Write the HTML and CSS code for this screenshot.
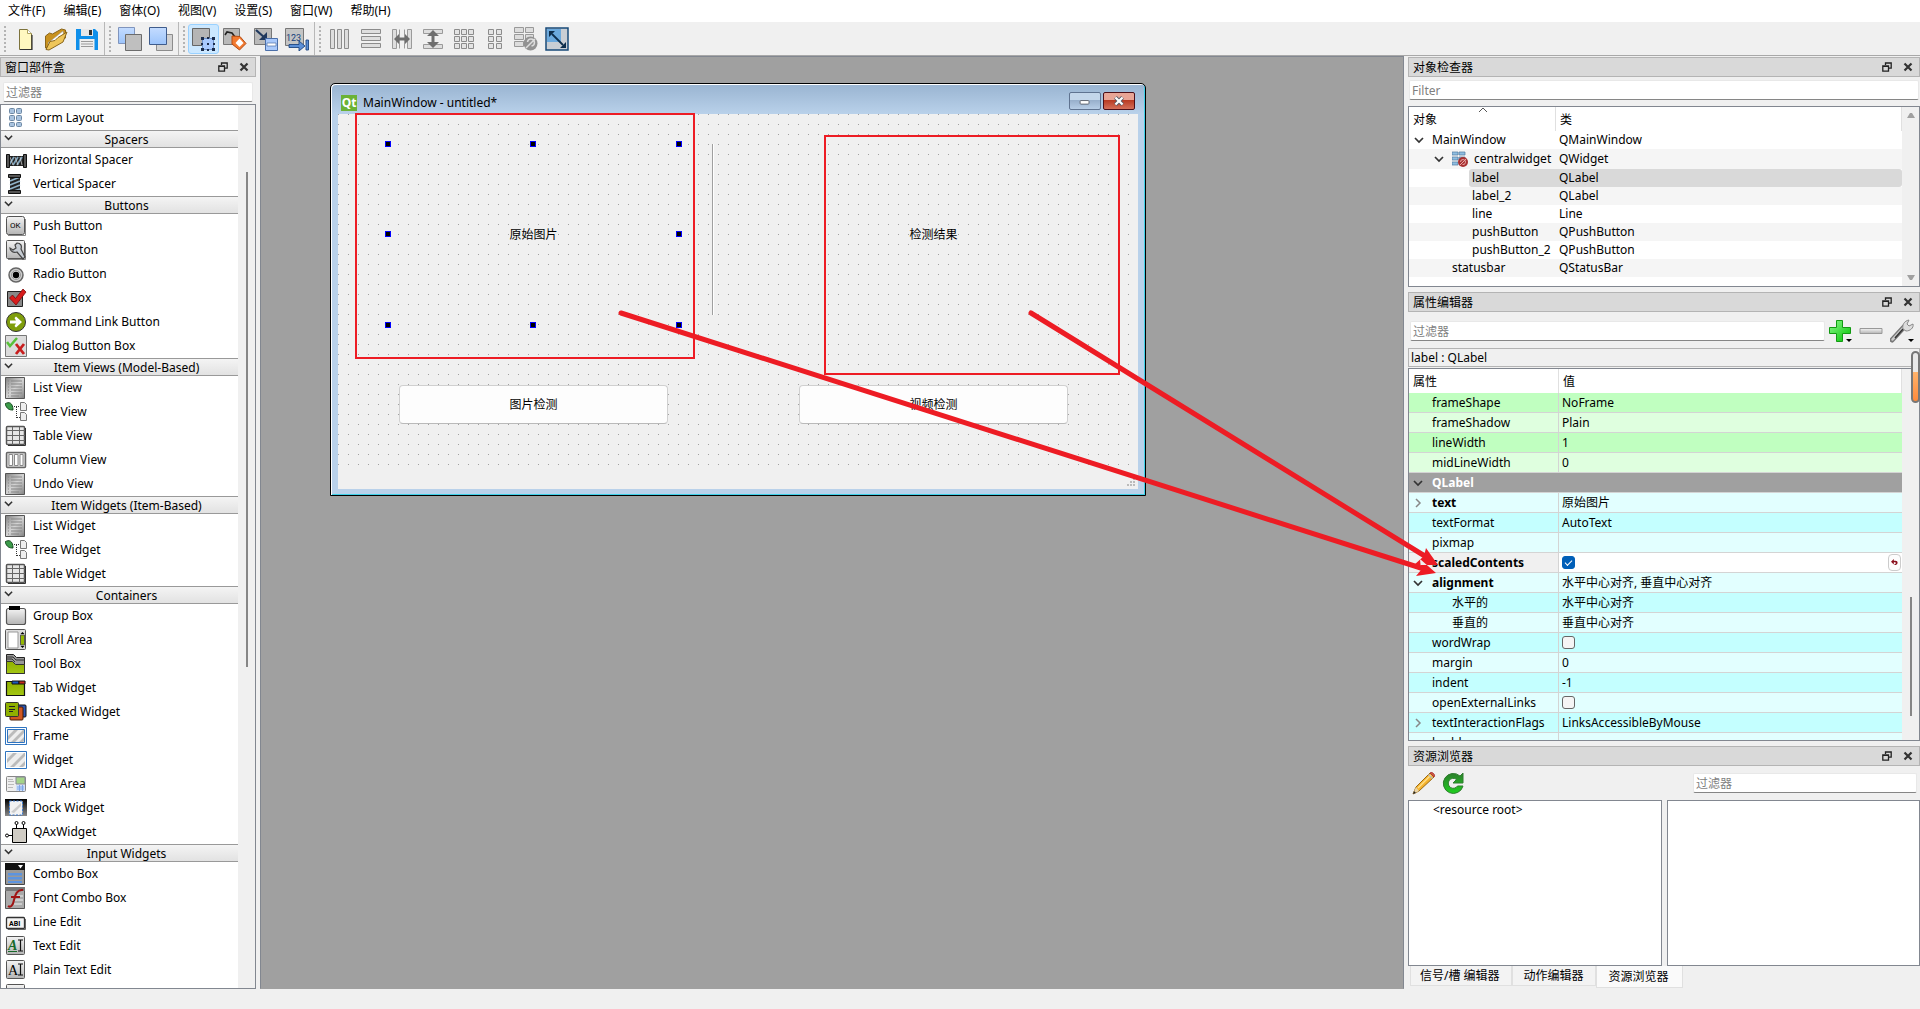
FILE: index.html
```html
<!DOCTYPE html>
<html lang="zh-CN">
<head>
    <meta charset="UTF-8">
    <meta name="viewport" content="width=device-width, initial-scale=1.0">
    <title>Qt Designer</title>
    <link rel="stylesheet" href="styles.css">
</head>
<body>
    <!-- icon sprites -->
    <svg class="sprites" aria-hidden="true">
        <defs>
            <linearGradient id="g-grey" x1="0" y1="0" x2="0" y2="1"><stop offset="0" stop-color="#f4f4f4"/><stop offset="1" stop-color="#b4b4b4"/></linearGradient>
            <linearGradient id="g-dark" x1="0" y1="0" x2="1" y2="1"><stop offset="0" stop-color="#808080"/><stop offset=".5" stop-color="#d4d4d4"/><stop offset="1" stop-color="#808080"/></linearGradient>
            <linearGradient id="g-blue" x1="0" y1="0" x2="0" y2="1"><stop offset="0" stop-color="#c4dcff"/><stop offset="1" stop-color="#9cc4fb"/></linearGradient>
            <linearGradient id="g-plus" x1="0" y1="0" x2="1" y2="1"><stop offset="0" stop-color="#8dfb8d"/><stop offset="1" stop-color="#00c000"/></linearGradient>
            <linearGradient id="g-lime" x1="0" y1="0" x2="0" y2="1"><stop offset="0" stop-color="#8fb000"/><stop offset="1" stop-color="#a3c614"/></linearGradient>
            <linearGradient id="g-green" x1="0" y1="0" x2="0" y2="1"><stop offset="0" stop-color="#2c7d2c"/><stop offset="1" stop-color="#1fd01f"/></linearGradient>
            <linearGradient id="g-black" x1="0" y1="0" x2="0" y2="1"><stop offset="0" stop-color="#000"/><stop offset="1" stop-color="#8a8a8a"/></linearGradient>
        </defs>
        <symbol id="i-float" viewBox="0 0 10 10"><path d="M3.5 3V.8h5.7v5.4H7M3 1h6.4M.8 3.8h5.7v5.4H.8zM.8 4.4h5.7" fill="none" stroke="#222" stroke-width="1.3"/></symbol>
        <symbol id="i-close" viewBox="0 0 10 10"><path d="M1.5 1.5l7 7M8.5 1.5l-7 7" stroke="#333" stroke-width="2.2"/></symbol>
        <symbol id="i-chev" viewBox="0 0 10 10"><path d="M1 3l4 4 4-4" fill="none" stroke="#333" stroke-width="1.7"/></symbol>
        <symbol id="i-chevr" viewBox="0 0 10 10"><path d="M3 1l4 4-4 4" fill="none" stroke="#888" stroke-width="1.5"/></symbol>

        <!-- toolbar -->
        <symbol id="i-new" viewBox="0 0 24 24"><path d="M6.500 2.500h8l4 4v16h-12z" fill="#fff8c0" stroke="#7d733c"/><path d="M14.500 2.500v4h4" fill="#fff" stroke="#b0a560"/><path d="M7 22.500h12V8" fill="none" stroke="#333" stroke-width="1.2"/></symbol>
        <symbol id="i-open" viewBox="0 0 24 24"><path d="M1.500 21V9l4-3 3 1 9-5 4 1v8z" fill="#c9921e" stroke="#8a661c"/><path d="M4 16L19 4l1 8-14 9z" fill="#fff" stroke="#999" stroke-width=".6"/><path d="M2 22.500l4-8 5-1 3-3 9-5.500-4 10L5 23z" fill="#efc65a" stroke="#8a661c"/></symbol>
        <symbol id="i-save" viewBox="0 0 24 24"><path d="M1 2h19l3 3v18H1z" fill="#0f8fea"/><path d="M6 2h12v7H6z" fill="#e8e8e8"/><path d="M14 3h3v5h-3z" fill="#333"/><path d="M4.500 12h15v11h-15z" fill="#eee"/><path d="M6 14.500h12M6 17h12M6 19.500h12" stroke="#999"/></symbol>
        <symbol id="i-back" viewBox="0 0 24 24"><path d="M.5.5h16v16H.5z" fill="url(#g-blue)" stroke="#7f94bd"/><path d="M7.500 7.500h16v16h-16z" fill="#bfbfbf" stroke="#6c6c6c"/></symbol>
        <symbol id="i-front" viewBox="0 0 24 24"><path d="M7.500 7.500h16v16h-16z" fill="#d2d2d2" stroke="#8c8c8c"/><path d="M.5.5h17v17H.5z" fill="url(#g-blue)" stroke="#3f5c8c"/></symbol>
        <symbol id="i-widgets" viewBox="0 0 24 24"><path d="M.5 1.500h17v17H.500z" fill="#b5b5b5" stroke="#666"/><path d="M10.500 11.500h11v11h-11z" fill="#a9caff" stroke="#6e93cc"/><path d="M9 10h3v3H9zM15 10h2v2h-2zM20 10h3v3h-3zM9 16h2v2H9zM21 16h2v2h-2zM9 21h3v3H9zM15 22h2v2h-2zM20 21h3v3h-3zM15 16h2v2h-2z" fill="#1c2c4c"/></symbol>
        <symbol id="i-signals" viewBox="0 0 24 24"><path d="M.5 1.500h16v16H.500z" fill="#b9b9b9" stroke="#777"/><path d="M2 8l2-3 5 1 3 4" fill="none" stroke="#222" stroke-width="1.600"/><path d="M9 9l8 .5 6 7-6.500 6.500L9 17z" fill="#f37a30" stroke="#b44a10"/><path d="M16.500 11.500l4 4.500-4 4-4-4z" fill="#fff"/></symbol>
        <symbol id="i-buddy" viewBox="0 0 24 24"><path d="M.5 1.500h17v16H.500z" fill="#b9b9b9" stroke="#777"/><path d="M2 3l9 8" stroke="#20395e" stroke-width="2.200"/><path d="M13 13V5l-8 8z" fill="#20395e"/><path d="M11.500 11.500h12v12h-12z" fill="#a9c9fb" stroke="#4a6ea8"/><path d="M13 16h9v3h-9z" fill="#fff" stroke="#4a6ea8" stroke-width=".700"/></symbol>
        <symbol id="i-lay-h" viewBox="0 0 24 24"><path d="M2.500 2.500h4v19h-4zM9.500 2.500h4v19h-4zM16.500 2.500h4v19h-4z" fill="#dedede" stroke="#8c8c8c"/></symbol>
        <symbol id="i-lay-v" viewBox="0 0 24 24"><path d="M2.500 2.500h19v4h-19zM2.500 9.500h19v4h-19zM2.500 16.500h19v4h-19z" fill="#dedede" stroke="#8c8c8c"/></symbol>
        <symbol id="i-split-h" viewBox="0 0 24 24"><path d="M2.500 2.500h4v19h-4zM17.500 2.500h4v19h-4zM9.500 2.500v19M14.500 2.500v19" fill="#dedede" stroke="#9a9a9a"/><path d="M4 12l5-5v3.500h6V7l5 5-5 5v-3.500H9V17z" fill="#6e6e6e"/></symbol>
        <symbol id="i-split-v" viewBox="0 0 24 24"><path d="M2.500 2.500h19v4h-19zM2.500 17.500h19v4h-19z" fill="#dedede" stroke="#9a9a9a"/><path d="M12 3l6 6h-4.500v6H18l-6 6-6-6h4.500V9H6z" fill="#6e6e6e"/></symbol>
        <symbol id="i-grid" viewBox="0 0 24 24"><path d="M2.500 2.500h5v5h-5zM9.500 2.500h5v5h-5zM16.500 2.500h5v5h-5zM2.500 9.500h5v5h-5zM9.500 9.500h5v5h-5zM16.500 9.500h5v5h-5zM2.500 16.500h5v5h-5zM9.500 16.500h5v5h-5zM16.500 16.500h5v5h-5z" fill="#e4e4e4" stroke="#8c8c8c"/></symbol>
        <symbol id="i-form" viewBox="0 0 24 24"><path d="M5.500 2.500h5v5h-5zM13.500 2.500h5v5h-5zM5.500 9.500h5v5h-5zM13.500 9.500h5v5h-5zM5.500 16.500h5v5h-5zM13.500 16.500h5v5h-5z" fill="#e4e4e4" stroke="#8c8c8c"/></symbol>
        <symbol id="i-break" viewBox="0 0 24 24"><path d="M.5.500h9v5h-9zM11.500.500h8v5h-8zM.5 7.500h9v5h-9zM11.500 7.500h8v5h-8zM.5 14.500h9v5h-9z" fill="#ddd" stroke="#999"/><circle cx="16.500" cy="16.500" r="7" fill="#929292"/><path d="M13.500 15a3.500 3.500 0 1 1 4 4M12 21l9-9" fill="none" stroke="#ddd" stroke-width="1.500"/></symbol>
        <symbol id="i-adjust" viewBox="0 0 24 24"><path d="M1 1h22v22H1z" fill="#c9ced4" stroke="#174a78" stroke-width="1.500"/><path d="M2 2h14v13H2z" fill="#6ba9dd"/><path d="M7 7l11 11" stroke="#0d2d4c" stroke-width="1.800"/><path d="M4 4h6l-6 6zM21 21h-6l6-6z" fill="#0d2d4c"/></symbol>

        <!-- widget box -->
        <symbol id="w-form" viewBox="0 0 22 22"><g fill="#a9c3df" stroke="#6c87a3"><rect x="4.500" y="1.500" width="5" height="5" rx="1"/><rect x="11.500" y="1.500" width="5" height="5" rx="1"/><rect x="4.500" y="8.500" width="5" height="5" rx="1"/><rect x="11.500" y="8.500" width="5" height="5" rx="1"/><rect x="4.500" y="15.500" width="5" height="4" rx="1"/><rect x="11.500" y="15.500" width="5" height="4" rx="1"/></g></symbol>
        <symbol id="w-hspacer" viewBox="0 0 22 22"><path d="M3 7h16v10H3z" fill="#222"/><path d="M4 16L9 8M8 16l5-8M12 16l5-8" stroke="#7fa3bb" stroke-width="1.800"/><path d="M5 8l3 8M10 8l3 8M15 8l2 8" stroke="#ddd" stroke-width=".700"/><path d="M1.500 5.500h3v13h-3zM18.500 5.500h3v13h-3z" fill="#555" stroke="#111"/></symbol>
        <symbol id="w-vspacer" viewBox="0 0 22 22"><path d="M5 4h10v14H5z" fill="#222"/><path d="M5 8l10-4M5 12l10-4M5 16l10-4M6 19l9-3" stroke="#8fb2c8" stroke-width="1.800"/><path d="M3.500 1.500h12v3h-12zM3.500 17.500h12v3h-12z" fill="#555" stroke="#111"/></symbol>
        <symbol id="w-tool" viewBox="0 0 22 22"><rect x="1.500" y="1.500" width="18" height="18" rx="1" fill="url(#g-grey)" stroke="#555"/><path d="M3 20.500h17.500V4" fill="none" stroke="#888"/><path d="M12 4c4 0 5 3 4 6l4 8-2 2-6-7c-4 1-7-1-7-4l3 2 3-2-1-3z" fill="#c6ccd3" stroke="#444" stroke-width="1.200"/></symbol>
        <symbol id="w-radio" viewBox="0 0 22 22"><circle cx="11" cy="12" r="7" fill="#ccc" stroke="#666" stroke-width="1.500"/><circle cx="11" cy="12" r="4.500" fill="#ddd" stroke="#888" stroke-width=".800"/><circle cx="11" cy="12" r="3.200" fill="#000"/></symbol>
        <symbol id="w-check" viewBox="0 0 22 22"><path d="M2.500 4.500h15v15h-15z" fill="#888" stroke="#222"/><path d="M4.500 11l3-3 3 3.500L18 2l3 3-10 13z" fill="#d81c1c" stroke="#7c0a0a" stroke-width=".800"/></symbol>
        <symbol id="w-link" viewBox="0 0 22 22"><circle cx="11" cy="11" r="9.500" fill="#7f9d0b" stroke="#333"/><path d="M5 9.500h6L9.500 7 11 5.500l6 5.500-6 5.500L9.500 15l1.500-2.500H5z" fill="#fff"/></symbol>
        <symbol id="w-dialog" viewBox="0 0 22 22"><path d="M.5.5h21v21H.5z" fill="#dcdcdc" stroke="#777"/><path d="M2 7l3 4 7-8" fill="none" stroke="#57c038" stroke-width="2.500"/><path d="M11 9l8 10M19 9l-8 10" stroke="#c81e1e" stroke-width="2.800"/></symbol>
        <symbol id="w-list" viewBox="0 0 22 22"><path d="M.5.5h19v21H.5z" fill="url(#g-dark)" stroke="#555"/><path d="M3 4h1m2 0h11M3 7h1m2 0h11M3 10h1m2 0h11M3 13h1m2 0h11M3 16h1m2 0h11M3 19h1m2 0h8" stroke="#858585"/></symbol>
        <symbol id="w-tree" viewBox="0 0 22 22"><path d="M0 3c4-3 8-1 8 6-4 0-6-1-8-6z" fill="#3c9c4a" stroke="#174a20"/><path d="M9 5.500h6M11.500 6v11M12 16.500h4" stroke="#333" stroke-dasharray="1 1"/><path d="M15.500 1.500h4l2 2v6h-6zM15.500 11.500h4l2 2v6h-6z" fill="#eee" stroke="#777"/></symbol>
        <symbol id="w-table" viewBox="0 0 22 22"><rect x="1.500" y="1.500" width="18" height="18" rx="1" fill="#e6e6e6" stroke="#555" stroke-width="1.500"/><path d="M2 5.500h18M2 10.500h18M2 15.500h18M7.500 2v18M14.500 2v18" stroke="#666"/><path d="M3 20.500h17.500V3" fill="none" stroke="#333"/></symbol>
        <symbol id="w-column" viewBox="0 0 22 22"><rect x="1.500" y="3.500" width="19" height="15" rx="1" fill="#d9d9d9" stroke="#666" stroke-width="1.500"/><path d="M4 5.500h3.500v11H4zM9.500 5.500h3.500v11H9.500zM15 5.500h3v11h-3z" fill="#fff" stroke="#888"/></symbol>
        <symbol id="w-group" viewBox="0 0 22 22"><rect x="1.500" y="3.500" width="19" height="16" rx="2" fill="url(#g-grey)" stroke="#555" stroke-width="1.200"/><path d="M4 1h11v4H4z" fill="#000"/></symbol>
        <symbol id="w-scroll" viewBox="0 0 22 22"><rect x=".5" y=".5" width="20" height="20" rx="1" fill="#ddd" stroke="#555"/><path d="M3 3h10v16H3z" fill="#fff" stroke="#999"/><path d="M15.500 6h4v10h-4z" fill="#94b800" stroke="#555"/><path d="M15.500 5l2-2 2 2zM15.500 17l2 2 2-2z" fill="#000"/></symbol>
        <symbol id="w-toolbox" viewBox="0 0 22 22"><path d="M1.500 1.500h7l3 3h8v16h-18z" fill="#999" stroke="#222"/><path d="M1 4h7l3 3h9M1 6h6l3 3" stroke="#333" fill="none"/><path d="M1.500 8.500h6l3 3h9v9h-18z" fill="url(#g-lime)" stroke="#333"/></symbol>
        <symbol id="w-tabw" viewBox="0 0 22 22"><path d="M1.500 4.500h18v14h-18z" fill="url(#g-lime)" stroke="#111" stroke-width="1.200"/><path d="M7 4h7v3H7z" fill="#1d5cc0" stroke="#111"/><path d="M14 4h6v3h-6z" fill="#c42a1c" stroke="#111"/></symbol>
        <symbol id="w-stack" viewBox="0 0 22 22"><rect x="9" y="4" width="12" height="12" rx="1" fill="#2a55b5" stroke="#111"/><rect x="5" y="6" width="13" height="13" rx="1" fill="#cf5722" stroke="#4a1a00"/><rect x=".5" y="1.500" width="13" height="14" rx="1" fill="#8fb000" stroke="#333"/><path d="M4 5.500h6M4 8.500h6M4 10.500h4" stroke="#222"/></symbol>
        <symbol id="w-frame" viewBox="0 0 22 22"><path d="M.5 2.500h21v17H.5z" fill="#fff" stroke="#2f74c0"/><path d="M2.500 4.500h17v13h-17z" fill="#eee" stroke="#2f74c0"/><path d="M3 11l6-6h4L3 15zM6 17L18 5h1v3l-9 9zM14 17l5-5v4l-1 1z" fill="#bbb"/></symbol>
        <symbol id="w-widget" viewBox="0 0 22 22"><path d="M.5 2.500h21v17H.5z" fill="#fff" stroke="#2f74c0"/><path d="M2 4h18v14H2z" fill="#eee"/><path d="M2 10l6-6h4L2 14zM5 18L19 4h1v3L9 18zM14 18l6-6v4l-2 2z" fill="#bbb"/></symbol>
        <symbol id="w-mdi" viewBox="0 0 22 22"><rect x="1.500" y="3.500" width="19" height="15" rx="1" fill="#eee" stroke="#888"/><path d="M11 4h9v7h-9z" fill="#a4d488" stroke="#889"/><path d="M11 12h9v6h-9z" fill="#cfe0fa"/><path d="M12 14h7M12 16h7M14.500 12v6M17.500 12v6" stroke="#7fa6e8"/><path d="M3 6.500h5M3 8.500h6M3 11.500h6M3 14.500h5" stroke="#bbb"/></symbol>
        <symbol id="w-dock" viewBox="0 0 22 22"><path d="M0 2h22v17H0z" fill="url(#g-black)"/><path d="M4.500 4h13v14h-13z" fill="#f2f2f2" stroke="#3c7cd4" stroke-dasharray="2 1.500"/><path d="M6 15L16 6v3l-7 7z" fill="#ccc"/></symbol>
        <symbol id="w-qax" viewBox="0 0 22 22"><path d="M7.500 7.500h14v14h-14z" fill="#d0ccc4" stroke="#000"/><path d="M11.500 7V3M18.500 7V3M7 14.500H3" stroke="#000"/><g fill="#fff" stroke="#000"><circle cx="11.500" cy="2" r="1.500"/><circle cx="18.500" cy="2" r="1.500"/><circle cx="2" cy="14.500" r="1.500"/></g></symbol>
        <symbol id="w-combo" viewBox="0 0 22 22"><path d="M.5.5h19v21H.5z" fill="#999" stroke="#444"/><path d="M0 0h20v7H0z" fill="#111"/><path d="M13 2h5l-2.500 3.500z" fill="#fff"/><path d="M3 10h14v2.500H3zM3 14h14v2.500H3zM3 18h14v2H3z" fill="#5c94e0"/></symbol>
        <symbol id="w-fcombo" viewBox="0 0 22 22"><path d="M.5.5h19v21H.5z" fill="#aaa" stroke="#555"/><path d="M0 0h20v4H0z" fill="#777"/><path d="M10 9h8M9 13h9M9 17h8" stroke="#ccc" stroke-width="2"/><path d="M3 19c3 2 5-1 6-6s3-11 9-10M6 10h9" fill="none" stroke="#a01414" stroke-width="2"/></symbol>
        <symbol id="w-blank" viewBox="0 0 22 22"><rect x="1.500" y="1.500" width="18" height="18" rx="1" fill="url(#g-grey)" stroke="#555"/></symbol>

        <!-- right docks -->
        <symbol id="i-nolayout" viewBox="0 0 16 16"><path d="M0 1h6v3H0zM7 1h6v3H7zM0 6h6v3H0zM0 11h6v3H0zM7 6h6v3H7z" fill="#8fbde0" stroke="#4d7a9e" stroke-width=".700"/><circle cx="11" cy="11" r="5" fill="#a83232"/><path d="M8.500 11a2.500 2.500 0 1 1 2 2.500M8 14l6-6" stroke="#e8a8a8" fill="none"/></symbol>
        <symbol id="i-plus" viewBox="0 0 24 24"><path d="M8.500 1.500h6v7h8v6h-8v8h-6v-8h-7v-6h7z" fill="url(#g-plus)" stroke="#129a12"/><path d="M18 20h6l-3 3z" fill="#000"/></symbol>
        <symbol id="i-minus" viewBox="0 0 24 24"><path d="M1 9.500h22v5H1z" fill="url(#g-grey)" stroke="#999"/></symbol>
        <symbol id="i-wrench" viewBox="0 0 24 24"><path d="M2 21L14 8" stroke="#777" stroke-width="5" stroke-linecap="round"/><path d="M2.500 20.500L14 8" stroke="#ccc" stroke-width="2.500" stroke-linecap="round"/><path d="M5 19l8-9" stroke="#333" stroke-width="1.500"/><path d="M13 10c-1-4 1-8 6-9l-2 4 2 2 4-2c1 4-3 7-7 7z" fill="#ddd" stroke="#888"/><path d="M18 20h6l-3 3z" fill="#000"/></symbol>
        <symbol id="i-pencil" viewBox="0 0 24 24"><path d="M1 23l3-7L18 2l4 4L7 20z" fill="#f5b32d" stroke="#9a6a14"/><path d="M6 17L19 4" stroke="#ffe08a" stroke-width="1.500"/><path d="M18 2c2-2 6 2 4 4l-4-4z" fill="#d05a42" stroke="#a33"/><path d="M16.500 3.500l4 4" stroke="#bbb" stroke-width="1.500"/><path d="M1 23l3-7 3 4z" fill="#e9d3a6"/><path d="M1 23l1-3 2 2z" fill="#222"/></symbol>
        <symbol id="i-reload" viewBox="0 0 24 24"><path d="M22 2v10H12l3.500-3.500A5 5 0 1 0 16.500 15H22A10 10 0 1 1 19 5z" fill="url(#g-green)" stroke="#2f7d2f"/></symbol>
        <symbol id="i-undo" viewBox="0 0 10 10"><path d="M0 4l4-4v2.500h2.500a2.500 2.500 0 0 1 0 6H5V7h1a1.200 1.200 0 0 0 0-2.200H4V8z" fill="#8a0f1c"/></symbol>
    </svg>

    <nav class="menubar">
        <button>文件(F)</button>
        <button>编辑(E)</button>
        <button>窗体(O)</button>
        <button>视图(V)</button>
        <button>设置(S)</button>
        <button>窗口(W)</button>
        <button>帮助(H)</button>
    </nav>

    <div class="toolbar">
        <div class="tool-group">
            <button aria-label="新建"><svg><use href="#i-new"/></svg></button>
            <button aria-label="打开"><svg><use href="#i-open"/></svg></button>
            <button aria-label="保存"><svg><use href="#i-save"/></svg></button>
        </div>
        <div class="tool-group">
            <button aria-label="放到后面"><svg><use href="#i-back"/></svg></button>
            <button aria-label="放到前面"><svg><use href="#i-front"/></svg></button>
        </div>
        <div class="tool-group">
            <button class="active" aria-label="编辑窗口部件"><svg><use href="#i-widgets"/></svg></button>
            <button aria-label="编辑信号/槽"><svg><use href="#i-signals"/></svg></button>
            <button aria-label="编辑伙伴"><svg><use href="#i-buddy"/></svg></button>
            <button aria-label="编辑Tab顺序"><svg viewBox="0 0 24 24"><path d="M.5 1.500h18v17H.500z" fill="#c4c4c4" stroke="#777"/><text class="icon-digits" x="1" y="14">123</text><path d="M4 17.500h10v-3.500l6 5-6 5v-3.500H4zM21 13h2.500v10H21z" fill="#5c8fd6" stroke="#1d4682" stroke-width=".900"/></svg></button>
        </div>
        <div class="tool-group">
            <button aria-label="水平布局"><svg><use href="#i-lay-h"/></svg></button>
            <button aria-label="垂直布局"><svg><use href="#i-lay-v"/></svg></button>
            <button aria-label="使用分裂器水平布局"><svg><use href="#i-split-h"/></svg></button>
            <button aria-label="使用分裂器垂直布局"><svg><use href="#i-split-v"/></svg></button>
            <button aria-label="栅格布局"><svg><use href="#i-grid"/></svg></button>
            <button aria-label="表单布局"><svg><use href="#i-form"/></svg></button>
            <button aria-label="打破布局"><svg><use href="#i-break"/></svg></button>
            <button aria-label="调整大小"><svg><use href="#i-adjust"/></svg></button>
        </div>
    </div>

    <div class="workspace">
        <aside class="dock widget-box">
            <header class="dock-title">
                <h2>窗口部件盒</h2>
                <button aria-label="浮动"><svg><use href="#i-float"/></svg></button>
                <button aria-label="关闭"><svg><use href="#i-close"/></svg></button>
            </header>
            <input class="filter" type="text" placeholder="过滤器" aria-label="过滤器">
            <div class="box-frame">
                <div class="box-list">
                    <ul>
                        <li><svg><use href="#w-form"/></svg>Form Layout</li>
                    </ul>
                    <button class="category"><svg><use href="#i-chev"/></svg>Spacers</button>
                    <ul>
                        <li><svg><use href="#w-hspacer"/></svg>Horizontal Spacer</li>
                        <li><svg><use href="#w-vspacer"/></svg>Vertical Spacer</li>
                    </ul>
                    <button class="category"><svg><use href="#i-chev"/></svg>Buttons</button>
                    <ul>
                        <li><svg viewBox="0 0 22 22"><rect x="1.500" y="1.500" width="18" height="18" rx="2" fill="url(#g-grey)" stroke="#555"/><path d="M3 20.500h17.500V4" fill="none" stroke="#888"/><text class="icon-ok" x="5" y="13">OK</text></svg>Push Button</li>
                        <li><svg><use href="#w-tool"/></svg>Tool Button</li>
                        <li><svg><use href="#w-radio"/></svg>Radio Button</li>
                        <li><svg><use href="#w-check"/></svg>Check Box</li>
                        <li><svg><use href="#w-link"/></svg>Command Link Button</li>
                        <li><svg><use href="#w-dialog"/></svg>Dialog Button Box</li>
                    </ul>
                    <button class="category"><svg><use href="#i-chev"/></svg>Item Views (Model-Based)</button>
                    <ul>
                        <li><svg><use href="#w-list"/></svg>List View</li>
                        <li><svg><use href="#w-tree"/></svg>Tree View</li>
                        <li><svg><use href="#w-table"/></svg>Table View</li>
                        <li><svg><use href="#w-column"/></svg>Column View</li>
                        <li><svg><use href="#w-list"/></svg>Undo View</li>
                    </ul>
                    <button class="category"><svg><use href="#i-chev"/></svg>Item Widgets (Item-Based)</button>
                    <ul>
                        <li><svg><use href="#w-list"/></svg>List Widget</li>
                        <li><svg><use href="#w-tree"/></svg>Tree Widget</li>
                        <li><svg><use href="#w-table"/></svg>Table Widget</li>
                    </ul>
                    <button class="category"><svg><use href="#i-chev"/></svg>Containers</button>
                    <ul>
                        <li><svg><use href="#w-group"/></svg>Group Box</li>
                        <li><svg><use href="#w-scroll"/></svg>Scroll Area</li>
                        <li><svg><use href="#w-toolbox"/></svg>Tool Box</li>
                        <li><svg><use href="#w-tabw"/></svg>Tab Widget</li>
                        <li><svg><use href="#w-stack"/></svg>Stacked Widget</li>
                        <li><svg><use href="#w-frame"/></svg>Frame</li>
                        <li><svg><use href="#w-widget"/></svg>Widget</li>
                        <li><svg><use href="#w-mdi"/></svg>MDI Area</li>
                        <li><svg><use href="#w-dock"/></svg>Dock Widget</li>
                        <li><svg><use href="#w-qax"/></svg>QAxWidget</li>
                    </ul>
                    <button class="category"><svg><use href="#i-chev"/></svg>Input Widgets</button>
                    <ul>
                        <li><svg><use href="#w-combo"/></svg>Combo Box</li>
                        <li><svg><use href="#w-fcombo"/></svg>Font Combo Box</li>
                        <li><svg viewBox="0 0 22 22"><rect x="1.500" y="6.500" width="18" height="11" rx="1" fill="#f3f3f3" stroke="#333" stroke-width="1.300"/><path d="M3 18.500h17.500V8" fill="none" stroke="#666"/><text class="icon-abi" x="4" y="15">ABI</text></svg>Line Edit</li>
                        <li><svg viewBox="0 0 22 22"><rect x="1.500" y="1.500" width="18" height="18" rx="1" fill="url(#g-grey)" stroke="#555"/><text class="icon-a rich" x="3" y="15">A</text><path d="M3 16.500h9" stroke="#17692a"/><path d="M13 5h5M13 16h5M15.500 5v11" stroke="#111" stroke-width="1.200"/></svg>Text Edit</li>
                        <li><svg viewBox="0 0 22 22"><rect x="1.500" y="1.500" width="18" height="18" rx="1" fill="url(#g-grey)" stroke="#555"/><text class="icon-a" x="3" y="16">A</text><path d="M13 5h5M13 16h5M15.500 5v11" stroke="#111" stroke-width="1.200"/></svg>Plain Text Edit</li>
                        <li><svg><use href="#w-blank"/></svg></li>
                    </ul>
                </div>
                <div class="scrollbar"><span class="thumb box-thumb"></span></div>
            </div>
        </aside>

        <main class="canvas">
            <section class="form-window">
                <header class="form-title">
                    <span class="qt-logo">Qt</span>
                    <h1>MainWindow - untitled*</h1>
                    <button class="win-min" aria-label="最小化"><svg viewBox="0 0 32 18"><rect x="10.500" y="8.500" width="10" height="4" rx="1" fill="#fff" stroke="#555a66"/></svg></button>
                    <button class="win-close" aria-label="关闭"><svg viewBox="0 0 32 18"><path d="M12 5l8 8M20 5l-8 8" stroke="#555a66" stroke-width="4.500"/><path d="M12 5l8 8M20 5l-8 8" stroke="#fff" stroke-width="2.500"/></svg></button>
                </header>
                <div class="form-body">
                    <div class="form-grid">
                        <div class="form-label label-1">原始图片
                            <i class="handle nw"></i><i class="handle n"></i><i class="handle ne"></i>
                            <i class="handle w"></i><i class="handle e"></i>
                            <i class="handle sw"></i><i class="handle s"></i><i class="handle se"></i>
                        </div>
                        <div class="form-line"></div>
                        <div class="form-label label-2">检测结果</div>
                        <button class="form-button button-1">图片检测</button>
                        <button class="form-button button-2">视频检测</button>
                    </div>
                    <div class="form-status">
                        <svg viewBox="0 0 9 9"><path d="M6 0h2v2H6zM3 3h2v2H3zM6 3h2v2H6zM0 6h2v2H0zM3 6h2v2H3zM6 6h2v2H6z" fill="#bbb"/></svg>
                    </div>
                </div>
            </section>
        </main>

        <aside class="right-docks">
            <section class="dock">
                <header class="dock-title">
                    <h2>对象检查器</h2>
                    <button aria-label="浮动"><svg><use href="#i-float"/></svg></button>
                    <button aria-label="关闭"><svg><use href="#i-close"/></svg></button>
                </header>
                <input class="filter object-filter" type="text" placeholder="Filter" aria-label="Filter">
                <div class="frame object-frame">
                    <table class="object-tree">
                        <thead>
                            <tr><th class="col-object">对象<svg class="sort" viewBox="0 0 10 6"><path d="M1 5l4-4 4 4" fill="none" stroke="#555"/></svg></th><th>类</th></tr>
                        </thead>
                        <tbody>
                            <tr><td><div class="cell level-0"><svg><use href="#i-chev"/></svg>MainWindow</div></td><td>QMainWindow</td></tr>
                            <tr class="tall"><td><div class="cell level-1"><svg><use href="#i-chev"/></svg><svg class="node-icon"><use href="#i-nolayout"/></svg>centralwidget</div></td><td>QWidget</td></tr>
                            <tr class="selected"><td><div class="cell level-2">label</div></td><td>QLabel</td></tr>
                            <tr><td><div class="cell level-2">label_2</div></td><td>QLabel</td></tr>
                            <tr><td><div class="cell level-2">line</div></td><td>Line</td></tr>
                            <tr><td><div class="cell level-2">pushButton</div></td><td>QPushButton</td></tr>
                            <tr><td><div class="cell level-2">pushButton_2</div></td><td>QPushButton</td></tr>
                            <tr><td><div class="cell level-bar">statusbar</div></td><td>QStatusBar</td></tr>
                        </tbody>
                    </table>
                    <div class="scrollbar arrows">
                        <svg viewBox="0 0 8 7"><path d="M0 6l3-5h2l3 5z" fill="#a0a0a0"/></svg>
                        <svg viewBox="0 0 8 7"><path d="M0 1l3 5h2l3-5z" fill="#a0a0a0"/></svg>
                    </div>
                </div>
            </section>

            <section class="dock property-dock">
                <header class="dock-title">
                    <h2>属性编辑器</h2>
                    <button aria-label="浮动"><svg><use href="#i-float"/></svg></button>
                    <button aria-label="关闭"><svg><use href="#i-close"/></svg></button>
                </header>
                <div class="property-tools">
                    <input class="filter" type="text" placeholder="过滤器" aria-label="过滤器">
                    <button aria-label="添加动态属性"><svg><use href="#i-plus"/></svg></button>
                    <button aria-label="删除动态属性"><svg><use href="#i-minus"/></svg></button>
                    <button aria-label="配置"><svg><use href="#i-wrench"/></svg></button>
                </div>
                <div class="object-name">label : QLabel</div>
                <div class="frame property-frame">
                    <table class="properties">
                        <thead>
                            <tr><th class="col-property">属性</th><th>值</th></tr>
                        </thead>
                        <tbody>
                            <tr class="green"><td>frameShape</td><td>NoFrame</td></tr>
                            <tr class="green light"><td>frameShadow</td><td>Plain</td></tr>
                            <tr class="green"><td>lineWidth</td><td>1</td></tr>
                            <tr class="green light"><td>midLineWidth</td><td>0</td></tr>
                            <tr class="group"><td colspan="2"><div class="cell"><svg><use href="#i-chev"/></svg>QLabel</div></td></tr>
                            <tr class="cyan light changed"><td><div class="cell"><svg><use href="#i-chevr"/></svg>text</div></td><td>原始图片</td></tr>
                            <tr class="cyan"><td>textFormat</td><td>AutoText</td></tr>
                            <tr class="cyan light"><td>pixmap</td><td></td></tr>
                            <tr class="current changed"><td><label for="scaled">scaledContents</label></td><td><div class="editor"><input type="checkbox" id="scaled" checked><button class="reset" aria-label="重置"><svg><use href="#i-undo"/></svg></button></div></td></tr>
                            <tr class="cyan light changed"><td><div class="cell"><svg><use href="#i-chev"/></svg>alignment</div></td><td>水平中心对齐, 垂直中心对齐</td></tr>
                            <tr class="cyan sub"><td>水平的</td><td>水平中心对齐</td></tr>
                            <tr class="cyan light sub"><td>垂直的</td><td>垂直中心对齐</td></tr>
                            <tr class="cyan"><td><label for="wrap">wordWrap</label></td><td><div class="editor"><input type="checkbox" id="wrap"></div></td></tr>
                            <tr class="cyan light"><td>margin</td><td>0</td></tr>
                            <tr class="cyan"><td>indent</td><td>-1</td></tr>
                            <tr class="cyan light"><td><label for="links">openExternalLinks</label></td><td><div class="editor"><input type="checkbox" id="links"></div></td></tr>
                            <tr class="cyan"><td><div class="cell"><svg><use href="#i-chevr"/></svg>textInteractionFlags</div></td><td>LinksAccessibleByMouse</td></tr>
                            <tr class="cyan light"><td>buddy</td><td></td></tr>
                        </tbody>
                    </table>
                    <div class="scrollbar"><span class="thumb property-thumb"></span></div>
                </div>
                <span class="level-meter"></span>
            </section>

            <section class="dock">
                <header class="dock-title">
                    <h2>资源浏览器</h2>
                    <button aria-label="浮动"><svg><use href="#i-float"/></svg></button>
                    <button aria-label="关闭"><svg><use href="#i-close"/></svg></button>
                </header>
                <div class="resource-tools">
                    <button aria-label="编辑资源"><svg><use href="#i-pencil"/></svg></button>
                    <button aria-label="重新载入"><svg><use href="#i-reload"/></svg></button>
                    <input class="filter" type="text" placeholder="过滤器" aria-label="过滤器">
                </div>
                <div class="resource-panes">
                    <div class="pane">&lt;resource root&gt;</div>
                    <div class="pane"></div>
                </div>
            </section>
            <div class="tabs">
                <button>信号/槽 编辑器</button>
                <button>动作编辑器</button>
                <button class="active">资源浏览器</button>
            </div>
        </aside>
    </div>

    <footer class="statusbar"></footer>

    <!-- red marks drawn over the form -->
    <svg class="marks" width="1440" height="600" aria-hidden="true">
        <g fill="none" stroke="#ed1c24" stroke-width="2">
            <rect x="356" y="114" width="338" height="244"/>
            <rect x="825" y="136" width="294" height="238"/>
        </g>
        <g stroke="#ed1c24" stroke-width="5" stroke-linecap="round">
            <path d="M621 313L1424 569"/>
            <path d="M1031 313L1428 558"/>
        </g>
        <path d="M1436 573l-20 3 5-6-1-11zM1438 565l-12-17-2 8-10 9z" fill="#ed1c24"/>
    </svg>
</body>
</html>
```
FILE: styles.css
```css
* {
    box-sizing: border-box;
}
body {
    margin: 0;
    height: 100vh;
    display: flex;
    flex-direction: column;
    overflow: hidden;
    background: #f0f0f0;
    color: #000;
    font-family: "Noto Sans", "Noto Sans CJK SC", sans-serif;
    font-size: 12px;
    line-height: 16px;
}
button, input {
    font: inherit;
    color: inherit;
    margin: 0;
}
button {
    padding: 0;
    border: none;
    background: none;
}
svg {
    display: block;
    flex: none;
}
ul {
    list-style: none;
    margin: 0;
    padding: 0;
}
h1, h2 {
    margin: 0;
    font-size: 12px;
    font-weight: normal;
}
.sprites {
    position: absolute;
    width: 0;
    height: 0;
}
.icon-digits {
    font: 9px Roboto, sans-serif;
    fill: #16407a;
}
.icon-ok {
    font: 8px Roboto, sans-serif;
}
.icon-abi {
    font: bold 7px Roboto, sans-serif;
}
.icon-a {
    font: 14px "Liberation Serif", serif;
}
.icon-a.rich {
    font-style: italic;
    font-weight: bold;
    fill: #17692a;
}

/* menu and toolbar */
.menubar {
    display: flex;
    gap: 2px;
    height: 22px;
    background: #fff;
}
.menubar button {
    padding: 0 8px;
}
.toolbar {
    display: flex;
    height: 34px;
    border-bottom: 1px solid #a8a8a8;
}
.tool-group {
    display: flex;
    align-items: center;
    padding-right: 2px;
    border-right: 1px solid #b8b8b8;
}
.tool-group:last-child {
    border-right: none;
}
.tool-group::before {
    content: "";
    width: 2px;
    height: 26px;
    margin: 0 3px 0 4px;
    background: repeating-linear-gradient(#b4b4b4 0 2px, transparent 2px 4px);
}
.tool-group button {
    width: 31px;
    height: 30px;
    display: flex;
    align-items: center;
    justify-content: center;
    border: 1px solid transparent;
    border-radius: 3px;
}
.tool-group button.active {
    background: #cce8ff;
    border-color: #99d1ff;
}
.tool-group svg {
    width: 24px;
    height: 24px;
}

/* docks */
.workspace {
    flex: 1;
    display: flex;
    min-height: 0;
}
.dock {
    display: flex;
    flex-direction: column;
}
.dock-title {
    display: flex;
    align-items: center;
    flex: none;
    height: 20px;
    margin-top: 1px;
    padding: 0 6px 0 4px;
    border: 1px solid #b4b4b4;
    background: #d9d9d9;
}
.dock-title h2 {
    flex: 1;
    padding-top: 2px;
}
.dock-title button {
    margin-left: 11px;
}
.dock-title svg {
    width: 10px;
    height: 10px;
}
.filter {
    flex: none;
    height: 20px;
    min-width: 0;
    padding: 0 2px;
    border: 1px solid #e8e8e8;
    border-bottom-color: #868686;
    border-radius: 2px;
    background: #fff;
    outline: none;
}
.filter::placeholder {
    color: #7f7f7f;
}
.scrollbar {
    flex: none;
    width: 17px;
    background: #f0f0f0;
}
.thumb {
    display: block;
    width: 2px;
    margin-left: 8px;
    background: #868686;
}
.widget-box {
    width: 256px;
    margin-right: 4px;
}
.widget-box .filter {
    margin: 5px 3px 2px;
}
.box-frame {
    flex: 1;
    display: flex;
    min-height: 0;
    border: 1px solid #828790;
    background: #fff;
    overflow: hidden;
}
.box-list {
    flex: 1;
    padding-top: 1px;
}
.box-list li {
    display: flex;
    align-items: center;
    gap: 6px;
    height: 24px;
    padding-left: 4px;
}
.box-list li svg {
    width: 22px;
    height: 22px;
}
.category {
    display: flex;
    align-items: center;
    justify-content: center;
    position: relative;
    width: 100%;
    height: 18px;
    padding: 2px 0 0 14px;
    border-top: 1px solid #999;
    border-bottom: 1px solid #999;
    background: linear-gradient(#f4f4f4, #e2e2e2);
}
.category svg {
    position: absolute;
    left: 3px;
    top: 2px;
    width: 9px;
    height: 9px;
}
.box-thumb {
    height: 495px;
    margin-top: 67px;
}

/* form being edited */
.canvas {
    flex: 1;
    min-width: 0;
    position: relative;
    overflow: hidden;
    border: 1px solid #828790;
    border-bottom-color: #a0a0a0;
    background: #a0a0a0;
}
.form-window {
    position: absolute;
    left: 69px;
    top: 26px;
    padding: 0 6px 6px;
    border: 1px solid #000;
    border-radius: 5px 5px 0 0;
    background: linear-gradient(#99b4d1, #b9d1ea 30px);
    box-shadow: inset 1px 1px 0 #fff, inset -1px -1px 0 #3fd0e8;
}
.form-title {
    display: flex;
    align-items: center;
    height: 30px;
    padding: 8px 4px 0 4px;
}
.form-title h1 {
    flex: 1;
    padding-left: 6px;
}
.qt-logo {
    width: 16px;
    height: 16px;
    background: #6bb236;
    color: #fff;
    font-weight: bold;
    text-align: center;
}
.form-title button {
    width: 32px;
    height: 18px;
    margin-left: 2px;
    margin-bottom: 4px;
    border-radius: 2px;
    border: 1px solid #5f7390;
    background: linear-gradient(#c3d6ea 45%, #97afcb 45%, #b7cde6);
}
.form-title .win-close {
    border-color: #4c0f18;
    background: linear-gradient(#e8a596 45%, #b83a22 45%, #d5705a);
}
.form-title svg {
    width: 30px;
    height: 16px;
}
.form-body {
    width: 800px;
    margin: 0 1px;
    background: #f0f0f0;
}
.form-grid {
    position: relative;
    height: 351px;
    background: conic-gradient(from 270deg at 1px 1px, #a0a0a0 90deg, transparent 90deg) 0 0 / 10px 10px;
}
.form-label {
    position: absolute;
    display: flex;
    align-items: center;
    justify-content: center;
    width: 291px;
    height: 181px;
    top: 30px;
}
.label-1 {
    left: 50px;
}
.label-2 {
    left: 450px;
}
.handle {
    position: absolute;
    width: 6px;
    height: 6px;
    border: 1px solid #0000ff;
    background: #000;
}
.nw, .n, .ne { top: -3px; }
.w, .e { top: 87px; }
.sw, .s, .se { bottom: -3px; }
.nw, .w, .sw { left: -3px; }
.n, .s { left: 142px; }
.ne, .e, .se { right: -3px; }
.form-line {
    position: absolute;
    left: 374px;
    top: 30px;
    height: 171px;
    border-left: 1px solid #a0a0a0;
    border-right: 1px solid #fff;
}
.form-button {
    position: absolute;
    top: 271px;
    width: 269px;
    height: 39px;
    border: 1px solid #d0d0d0;
    border-bottom-color: #bababa;
    border-radius: 4px;
    background: #fdfdfd;
}
.button-1 {
    left: 61px;
}
.button-2 {
    left: 461px;
}
.form-status {
    display: flex;
    align-items: flex-end;
    justify-content: flex-end;
    height: 24px;
    padding: 2px;
}
.form-status svg {
    width: 9px;
    height: 9px;
}

/* right side */
.right-docks {
    width: 512px;
    margin-left: 4px;
    display: flex;
    flex-direction: column;
    gap: 4px;
}
.object-filter {
    margin: 3px 1px 6px;
}
.frame {
    display: flex;
    border: 1px solid #828790;
    background: #fff;
    overflow: hidden;
}
.object-frame {
    height: 181px;
}
table {
    flex: 1;
    align-self: flex-start;
    border-collapse: separate;
    border-spacing: 0;
    table-layout: fixed;
    width: 0;
}
th {
    height: 24px;
    padding: 2px 4px 0 4px;
    text-align: left;
    font-weight: normal;
    border-right: 1px solid #e0e0e0;
    background: #fff;
}
td {
    padding: 0 3px;
    white-space: nowrap;
}
.cell {
    display: flex;
    align-items: center;
}
.cell svg {
    width: 10px;
    height: 10px;
}
.col-object {
    width: 147px;
    position: relative;
}
.sort {
    position: absolute;
    left: 69px;
    top: 0;
    width: 10px;
    height: 6px;
}
.object-tree td {
    height: 18px;
    line-height: 16px;
}
.object-tree .tall td {
    height: 20px;
}
.object-tree td:first-child {
    padding: 0;
}
.object-tree tbody tr:nth-child(even) {
    background: #f5f5f5;
}
.object-tree .cell {
    gap: 8px;
}
.level-0 {
    padding-left: 5px;
}
.level-1 {
    padding-left: 25px;
}
.level-2 {
    height: 18px;
    margin-left: 60px;
    padding-left: 3px;
}
.level-bar {
    padding-left: 43px;
}
.cell .node-icon {
    width: 16px;
    height: 16px;
}
.level-1 .node-icon {
    margin-right: -2px;
}
.selected .cell {
    border-radius: 3px 0 0 3px;
}
.selected .cell, .selected td:last-child {
    background: #d9d9d9;
}
.selected td:last-child {
    border-radius: 0 3px 3px 0;
}
.arrows {
    display: flex;
    flex-direction: column;
    align-items: center;
    justify-content: space-between;
    padding: 5px 0;
}
.arrows svg {
    width: 8px;
    height: 7px;
}
.property-dock {
    flex: 1;
    min-height: 0;
    position: relative;
}
.property-tools {
    display: flex;
    align-items: center;
    gap: 7px;
    padding: 7px 6px 5px 2px;
}
.property-tools .filter {
    flex: 1;
    margin-right: -4px;
}
.property-tools svg, .resource-tools svg {
    width: 24px;
    height: 24px;
}
.object-name {
    height: 19px;
    padding: 1px 2px 0;
    border: 1px solid #b4b4b4;
}
.property-frame {
    flex: 1;
    min-height: 0;
    margin-top: 1px;
}
.col-property {
    width: 150px;
}
.properties td {
    height: 20px;
    border-bottom: 1px solid #d4d4d4;
    border-right: 1px solid #d4d4d4;
}
.properties td:last-child {
    border-right: none;
}
.properties td:first-child {
    padding-left: 23px;
}
.properties .cell {
    gap: 9px;
    margin-left: -19px;
}
.properties .sub td:first-child {
    padding-left: 43px;
}
.green { background: #c0ffc0; }
.green.light { background: #dfffdf; }
.cyan { background: #c4ffff; }
.cyan.light { background: #e2ffff; }
.group {
    background: #a0a0a0;
    color: #fff;
    font-weight: bold;
}
.changed td:first-child {
    font-weight: bold;
}
.current td:first-child {
    background: #f0f0f0;
}
.editor {
    display: flex;
    align-items: center;
    justify-content: space-between;
    height: 19px;
}
input[type="checkbox"] {
    appearance: none;
    width: 13px;
    height: 13px;
    border: 1px solid #666;
    border-radius: 3px;
    background: #f5f5f5;
}
input[type="checkbox"]:checked {
    border-color: #005fb8;
    background: #005fb8;
}
input[type="checkbox"]:checked::after {
    content: "";
    display: block;
    width: 6px;
    height: 3px;
    margin: 3px 0 0 2px;
    border-left: 1px solid #fff;
    border-bottom: 1px solid #fff;
    transform: rotate(-45deg);
}
.reset {
    display: flex;
    align-items: center;
    justify-content: center;
    width: 13px;
    height: 17px;
    margin-right: -2px;
    border: 1px solid #ccc;
    border-radius: 4px;
    background: #fdfdfd;
}
.reset svg {
    width: 7px;
    height: 7px;
}
.property-thumb {
    height: 119px;
    margin-top: 228px;
}
.level-meter {
    position: absolute;
    right: 0;
    top: 60px;
    width: 9px;
    height: 52px;
    border: 2px solid #777;
    border-radius: 5px;
    background: linear-gradient(#e9e9e9 40%, #ffb36b 40%, #ff8a3c);
}
.resource-tools {
    display: flex;
    align-items: center;
    gap: 5px;
    padding: 5px 3px 5px 4px;
}
.resource-tools .filter {
    width: 224px;
    margin-left: auto;
}
.resource-panes {
    display: flex;
    gap: 5px;
    height: 166px;
}
.pane {
    flex: 1;
    padding: 1px 24px;
    border: 1px solid #828790;
    background: #fff;
}
.tabs {
    display: flex;
    align-items: flex-start;
    margin-top: -4px;
    padding-left: 2px;
    height: 23px;
}
.tabs button {
    height: 20px;
    padding: 1px 11px 0 9px;
    border: 1px solid #e0e0e0;
    border-top: none;
    background: #f3f3f3;
}
.tabs button + button {
    padding-left: 11px;
}
.tabs button.active {
    height: 22px;
    padding: 0 13px 0 12px;
    background: #fafafa;
}
.statusbar {
    flex: none;
    height: 20px;
}

.marks {
    position: absolute;
    left: 0;
    top: 0;
    pointer-events: none;
}
```
